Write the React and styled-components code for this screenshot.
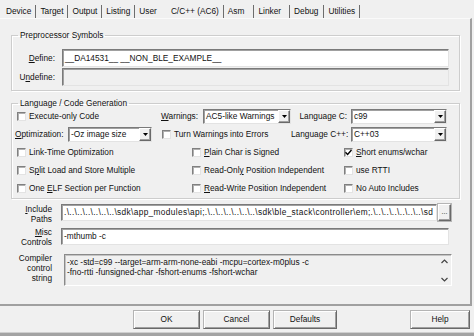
import styled, { createGlobalStyle } from "styled-components";

const GlobalStyle = createGlobalStyle`
  html, body {
    margin: 0;
    padding: 0;
    background: #f0f0f0;
  }
  body {
    font-family: "Liberation Sans", Arial, sans-serif;
    font-size: 8.3px;
    color: #111;
  }
  * {
    box-sizing: border-box;
  }
`;

const Dialog = styled.div`
  width: 474px;
  height: 336px;
  overflow: hidden;
  display: flex;
  flex-direction: column;
  background: #f0f0f0;
`;

const TabStrip = styled.div`
  display: flex;
  align-items: flex-end;
  height: 18px;
  padding-left: 2px;
  flex-shrink: 0;
`;

const Tab = styled.div`
  height: 13px;
  line-height: 13px;
  padding: 0 ${(p) => p.$pr || 4}px 0 ${(p) => (p.$active ? "10px" : "4px")};
  border-right: ${(p) => (p.$noSep ? "none" : "1px solid #6d6d6d")};
  white-space: nowrap;
`;

const Panel = styled.div`
  flex: 0 0 288px;
  width: 472px;
  border-top: 1px solid #fafafa;
  border-right: 2px solid #a0a0a0;
  border-bottom: 2px solid #a0a0a0;
  padding: 12px 11px 0 11px;
`;

const Group = styled.fieldset`
  margin: 0 0 ${(p) => p.$mb || 0}px 0;
  padding: ${(p) => p.$pad};
  width: 449px;
  min-width: 0;
  border: 1px solid #cdcdcd;
  box-shadow: inset 1px 1px 0 #fff, 1px 1px 0 #fff;
`;

const Legend = styled.legend`
  padding: 0 2px;
  margin-left: ${(p) => p.$ml || 0}px;
  line-height: 8px;
`;

const FieldRow = styled.div`
  display: flex;
  align-items: center;
  margin-bottom: ${(p) => p.$mb || 0}px;
`;

const SideLabel = styled.div`
  width: ${(p) => p.$w}px;
  flex-shrink: 0;
  text-align: right;
  padding-right: ${(p) => p.$pr || 0}px;
  white-space: nowrap;
`;

const TextBox = styled.div`
  width: ${(p) => p.$w}px;
  height: ${(p) => p.$h || 18}px;
  flex-shrink: 0;
  margin-left: ${(p) => p.$ml || 0}px;
  margin-top: ${(p) => p.$mt || 0}px;
  background: ${(p) => (p.$disabled ? "#f0f0f0" : "#fff")};
  border: 1px solid;
  border-color: #7a7a7a #e3e3e3 #e3e3e3 #7a7a7a;
  box-shadow: inset 1px 1px 0 #a0a0a0;
  padding: 0 2px;
  line-height: ${(p) => (p.$h || 18) - 2}px;
  letter-spacing: ${(p) => p.$ls || 0}px;
  white-space: nowrap;
  overflow: hidden;
`;

const Row = styled.div`
  display: flex;
  align-items: center;
  height: 18px;
`;

const Cell = styled.div`
  display: flex;
  align-items: center;
  width: ${(p) => (p.$w ? `${p.$w}px` : "auto")};
  padding-left: ${(p) => p.$pl || 0}px;
  flex-shrink: 0;
  white-space: nowrap;
`;

const Box = styled.span`
  width: 9px;
  height: 9px;
  flex-shrink: 0;
  display: flex;
  align-items: center;
  justify-content: center;
  background: #fff;
  border: 1px solid;
  border-color: #808080 #e3e3e3 #e3e3e3 #808080;
  box-shadow: inset 1px 1px 0 #b0b0b0;
  margin-right: 3px;
`;

const Key = styled.span`
  text-decoration: underline;
  text-underline-offset: 1px;
`;

const SelectBox = styled.div`
  display: flex;
  align-items: stretch;
  width: ${(p) => p.$w}px;
  height: 15px;
  flex-shrink: 0;
  background: #fff;
  border: 1px solid;
  border-color: #7a7a7a #e3e3e3 #e3e3e3 #7a7a7a;
  box-shadow: inset 1px 1px 0 #a0a0a0;
`;

const SelectText = styled.span`
  flex: 1;
  padding-left: 2px;
  line-height: 13px;
  white-space: nowrap;
  overflow: hidden;
`;

const DropBtn = styled.span`
  width: 12px;
  display: flex;
  align-items: center;
  justify-content: center;
  background: #f0f0f0;
  border: 1px solid;
  border-color: #fff #696969 #696969 #fff;
  box-shadow: inset -1px -1px 0 #a0a0a0;
`;

const PathRow = styled.div`
  display: flex;
  align-items: flex-start;
  margin-top: ${(p) => p.$mt || 0}px;
`;

const StackLabel = styled.div`
  width: 41px;
  flex-shrink: 0;
  text-align: right;
  line-height: 10px;
`;

const BrowseBtn = styled.div`
  width: 13px;
  height: 17px;
  margin-left: 1px;
  flex-shrink: 0;
  background: #f0f0f0;
  border: 1px solid;
  border-color: #fff #696969 #696969 #fff;
  box-shadow: inset -1px -1px 0 #a0a0a0, 0 0 0 1px #b5b5b5;
  text-align: center;
  line-height: 13px;
  font-size: 7px;
`;

const ReadOnlyBox = styled.div`
  display: flex;
  width: 388px;
  height: 32px;
  margin-left: 12px;
  margin-top: 1px;
  background: #f0f0f0;
  border: 1px solid;
  border-color: #8a8a8a #fff #fff #8a8a8a;
  box-shadow: inset 1px 1px 0 #c4c4c4;
`;

const ControlText = styled.div`
  flex: 1;
  padding: 2px 0 0 2px;
  line-height: 10px;
  white-space: nowrap;
  overflow: hidden;
`;

const ScrollCol = styled.div`
  width: 14px;
  display: flex;
  flex-direction: column;
  justify-content: space-between;
  align-items: center;
  padding: 4px 0 3px;
`;

const Footer = styled.div`
  display: flex;
  align-items: flex-start;
  height: 26px;
  flex-shrink: 0;
  padding: 4px 4px 0 133px;
`;

const Button = styled.div`
  width: ${(p) => p.$w}px;
  height: 19px;
  margin-left: ${(p) => (p.$push ? "auto" : `${p.$ml || 0}px`)};
  background: #f0f0f0;
  border: 1px solid;
  border-color: #b4b4b4 #696969 #696969 #b4b4b4;
  box-shadow: inset 1px 1px 0 #fff, inset -1px -1px 0 #a0a0a0;
  text-align: center;
  line-height: 17px;
`;

const BottomEdge = styled.div`
  flex: 1;
  background: #a3a3a3;
  border-top: 1px solid #cfcfcf;
`;

function Check({ checked, children }) {
  return (
    <>
      <Box>
        {checked && (
          <svg width="7" height="7" viewBox="0 0 7 7">
            <path d="M0.5 3.3 L2.6 5.4 L6.5 1" fill="none" stroke="#000" strokeWidth="1.4" />
          </svg>
        )}
      </Box>
      <span>{children}</span>
    </>
  );
}

function Select({ w, value }) {
  return (
    <SelectBox $w={w}>
      <SelectText>{value}</SelectText>
      <DropBtn>
        <svg width="5" height="3" viewBox="0 0 5 3">
          <path d="M0 0 H5 L2.5 3 Z" fill="#000" />
        </svg>
      </DropBtn>
    </SelectBox>
  );
}

const tabs = [
  { label: "Device" },
  { label: "Target" },
  { label: "Output" },
  { label: "Listing" },
  { label: "User", noSep: true },
  { label: "C/C++ (AC6)", active: true },
  { label: "Asm", pr: 9 },
  { label: "Linker", pr: 8 },
  { label: "Debug", pr: 5 },
  { label: "Utilities", pr: 4 },
];

const includePaths =
  ".\\..\\..\\..\\..\\..\\..\\sdk\\app_modules\\api;.\\..\\..\\..\\..\\..\\..\\sdk\\ble_stack\\controller\\em;.\\..\\..\\..\\..\\..\\..\\sd";

export default function App() {
  return (
    <Dialog>
      <GlobalStyle />
      <TabStrip>
        {tabs.map((t) => (
          <Tab key={t.label} $active={t.active} $noSep={t.noSep} $pr={t.pr}>
            {t.label}
          </Tab>
        ))}
      </TabStrip>

      <Panel>
        <Group $pad="10px 0 4px 6px" $mb={8}>
          <Legend>Preprocessor Symbols</Legend>
          <FieldRow $mb={1}>
            <SideLabel $w={37}>
              <Key>D</Key>efine:
            </SideLabel>
            <TextBox $w={387} $ml={7}>__DA14531__ __NON_BLE_EXAMPLE__</TextBox>
          </FieldRow>
          <FieldRow>
            <SideLabel $w={37}>
              U<Key>n</Key>define:
            </SideLabel>
            <TextBox $w={387} $ml={7} $disabled />
          </FieldRow>
        </Group>

        <Group $pad="0 0 1px 0">
          <Legend $ml={6}>Language / Code Generation</Legend>
          <Row>
            <Cell $w={149} $pl={5}>
              <Check>Execute-only Code</Check>
            </Cell>
            <Cell $w={42}>
              <span>
                <Key>W</Key>arnings:
              </span>
            </Cell>
            <Select w={88} value="AC5-like Warnings" />
            <SideLabel $w={60} $pr={4}>Language C:</SideLabel>
            <Select w={96} value="c99" />
          </Row>
          <Row>
            <Cell $w={56} $pl={3}>
              <span>
                <Key>O</Key>ptimization:
              </span>
            </Cell>
            <Select w={84} value="-Oz image size" />
            <Cell $w={139} $pl={10}>
              <Check>Turn Warnings into Errors</Check>
            </Cell>
            <SideLabel $w={60} $pr={4}>Language C++:</SideLabel>
            <Select w={96} value="C++03" />
          </Row>
          <Row>
            <Cell $w={180} $pl={5}>
              <Check>Link-Time Optimization</Check>
            </Cell>
            <Cell $w={152}>
              <Check>
                <Key>P</Key>lain Char is Signed
              </Check>
            </Cell>
            <Cell>
              <Check checked>
                <Key>S</Key>hort enums/wchar
              </Check>
            </Cell>
          </Row>
          <Row>
            <Cell $w={180} $pl={5}>
              <Check>
                S<Key>p</Key>lit Load and Store Multiple
              </Check>
            </Cell>
            <Cell $w={152}>
              <Check>
                Read-Onl<Key>y</Key> Position Independent
              </Check>
            </Cell>
            <Cell>
              <Check>use RTTI</Check>
            </Cell>
          </Row>
          <Row>
            <Cell $w={180} $pl={5}>
              <Check>
                One <Key>E</Key>LF Section per Function
              </Check>
            </Cell>
            <Cell $w={152}>
              <Check>
                <Key>R</Key>ead-Write Position Independent
              </Check>
            </Cell>
            <Cell>
              <Check>No Auto Includes</Check>
            </Cell>
          </Row>
        </Group>

        <PathRow $mt={5}>
          <StackLabel>
            <Key>I</Key>nclude
            <br />
            Paths
          </StackLabel>
          <TextBox $w={376} $h={17} $ml={9} $ls={0.35}>
            {includePaths}
          </TextBox>
          <BrowseBtn>...</BrowseBtn>
        </PathRow>

        <PathRow $mt={3}>
          <StackLabel>
            <Key>M</Key>isc
            <br />
            Controls
          </StackLabel>
          <TextBox $w={388} $h={17} $ml={9} $mt={1}>
            -mthumb -c
          </TextBox>
        </PathRow>

        <PathRow $mt={6}>
          <StackLabel>
            Compiler
            <br />
            control
            <br />
            string
          </StackLabel>
          <ReadOnlyBox>
            <ControlText>
              -xc -std=c99 --target=arm-arm-none-eabi -mcpu=cortex-m0plus -c
              <br />
              -fno-rtti -funsigned-char -fshort-enums -fshort-wchar
            </ControlText>
            <ScrollCol>
              <svg width="7" height="5" viewBox="0 0 7 5">
                <path d="M0.5 4 L3.5 1 L6.5 4" fill="none" stroke="#444" strokeWidth="1.2" />
              </svg>
              <svg width="7" height="5" viewBox="0 0 7 5">
                <path d="M0.5 1 L3.5 4 L6.5 1" fill="none" stroke="#444" strokeWidth="1.2" />
              </svg>
            </ScrollCol>
          </ReadOnlyBox>
        </PathRow>
      </Panel>

      <Footer>
        <Button $w={67}>OK</Button>
        <Button $w={67} $ml={3}>Cancel</Button>
        <Button $w={64} $ml={3}>Defaults</Button>
        <Button $w={60} $push>Help</Button>
      </Footer>
      <BottomEdge />
    </Dialog>
  );
}
